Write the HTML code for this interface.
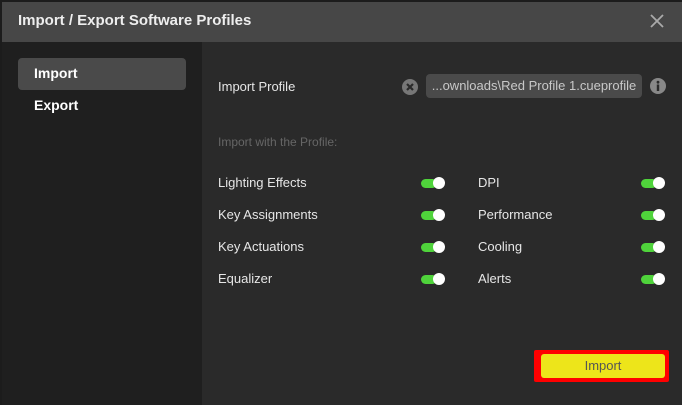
<!DOCTYPE html><html><head><style>
body{margin:0;width:682px;height:405px;background:#1c1c1c;font-family:"Liberation Sans",sans-serif;overflow:hidden;position:relative}
.a{position:absolute}
.t{color:#e6e6e6;font-size:13px}
.tg{position:absolute;width:26px;height:14px}
.tg:before{content:"";position:absolute;left:0;top:3px;width:16px;height:9px;border-radius:5px;background:#4fd33b}
.tg:after{content:"";position:absolute;left:12px;top:1px;width:12px;height:12px;border-radius:50%;background:#fff}
</style></head><body>
<div class="a" style="left:2px;top:2px;width:680px;height:40px;background:#474747"></div>
<div class="a" style="left:18px;top:12px;color:#eee;font-size:15px;font-weight:bold">Import / Export Software Profiles</div>
<svg class="a" style="left:650px;top:14px" width="14" height="14"><path d="M1 1L13 13M13 1L1 13" stroke="#aaa" stroke-width="1.8"/></svg>
<div class="a" style="left:2px;top:42px;width:200px;height:363px;background:#1f1f1f"></div>
<div class="a" style="left:202px;top:42px;width:480px;height:363px;background:#2a2a2a"></div>
<div class="a" style="left:18px;top:58px;width:168px;height:32px;border-radius:4px;background:#4a4a4a"></div>
<div class="a" style="left:34px;top:65px;color:#fff;font-size:14px;font-weight:bold">Import</div>
<div class="a" style="left:34px;top:97px;color:#fff;font-size:14px;font-weight:bold">Export</div>
<div class="a t" style="left:218px;top:79px">Import Profile</div>
<svg class="a" style="left:401px;top:78px" width="18" height="18"><circle cx="9" cy="9" r="8" fill="#777"/><path d="M6 6L12 12M12 6L6 12" stroke="#2a2a2a" stroke-width="2.2"/></svg>
<div class="a" style="left:426px;top:74px;width:216px;height:24px;border-radius:4px;background:#4a4a4a;color:#c8c8c8;font-size:13px;line-height:24px;text-align:center">...ownloads\Red Profile 1.cueprofile</div>
<svg class="a" style="left:649px;top:77px" width="18" height="18"><circle cx="9" cy="9" r="8" fill="#888"/><circle cx="9" cy="5.2" r="1.4" fill="#2a2a2a"/><rect x="7.8" y="7.5" width="2.4" height="6.5" fill="#2a2a2a"/></svg>
<div class="a" style="left:218px;top:135px;color:#666;font-size:12px">Import with the Profile:</div>
<div class="a t" style="left:218px;top:175px">Lighting Effects</div>
<div class="a t" style="left:218px;top:207px">Key Assignments</div>
<div class="a t" style="left:218px;top:239px">Key Actuations</div>
<div class="a t" style="left:218px;top:271px">Equalizer</div>
<div class="a t" style="left:478px;top:175px">DPI</div>
<div class="a t" style="left:478px;top:207px">Performance</div>
<div class="a t" style="left:478px;top:239px">Cooling</div>
<div class="a t" style="left:478px;top:271px">Alerts</div>
<div class="tg" style="left:421px;top:176px"></div><div class="tg" style="left:421px;top:208px"></div>
<div class="tg" style="left:421px;top:240px"></div><div class="tg" style="left:421px;top:272px"></div>
<div class="tg" style="left:641px;top:176px"></div><div class="tg" style="left:641px;top:208px"></div>
<div class="tg" style="left:641px;top:240px"></div><div class="tg" style="left:641px;top:272px"></div>
<div class="a" style="left:534px;top:350px;width:135px;height:32px;background:#f00;border-radius:2px"></div>
<div class="a" style="left:541px;top:354px;width:124px;height:24px;background:#ede51a;border-radius:3px;color:#555;font-size:13px;line-height:24px;text-align:center">Import</div>
</body></html>
